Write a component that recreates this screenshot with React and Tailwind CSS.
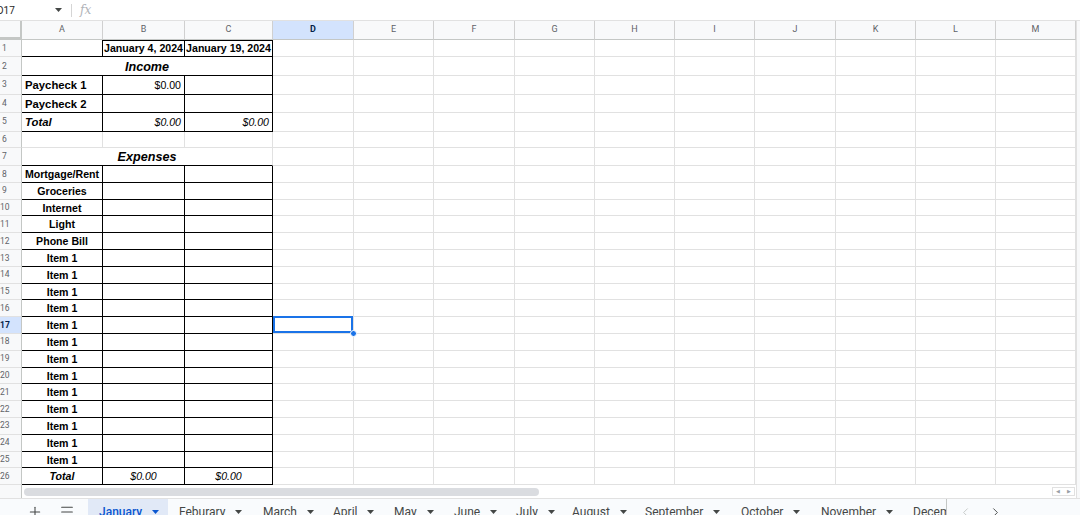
import React from "react";
import { Plus, Menu, ChevronLeft, ChevronRight } from "lucide-react";

// columns D..M (A-C are part of the budget table)
const REST = [
  { letter: "D", w: "w-[81px]" },
  { letter: "E", w: "w-[80px]" },
  { letter: "F", w: "w-[81px]" },
  { letter: "G", w: "w-[80px]" },
  { letter: "H", w: "w-[80px]" },
  { letter: "I", w: "w-[80px]" },
  { letter: "J", w: "w-[81px]" },
  { letter: "K", w: "w-[80px]" },
  { letter: "L", w: "w-[80px]" },
  { letter: "M", w: "w-[80px]" },
];

const HEAD = [
  { letter: "A", w: "w-[81px]" },
  { letter: "B", w: "w-[82px]" },
  { letter: "C", w: "w-[88px]" },
  ...REST,
];

const A = "w-[81px]";
const B = "w-[82px]";
const C = "w-[88px]";
const ABC = "w-[251px]";
const ROW_H = "h-[16.8px]";

const labels = [
  "Mortgage/Rent",
  "Groceries",
  "Internet",
  "Light",
  "Phone Bill",
  ...Array(13).fill("Item 1"),
];

const ROWS = [
  {
    n: 1,
    h: "h-[17px]",
    cells: [
      { w: A, r: 1, b: 1 },
      { w: B, r: 1, b: 1, t: 1, cls: "justify-center font-bold px-0", text: "January 4, 2024" },
      { w: C, r: 1, b: 1, t: 1, cls: "justify-center font-bold px-0", text: "January 19, 2024" },
    ],
  },
  {
    n: 2,
    h: "h-[19px]",
    cells: [{ w: ABC, r: 1, b: 1, cls: "justify-center font-bold italic text-[12.6px]", text: "Income" }],
  },
  {
    n: 3,
    h: "h-[18.5px]",
    cells: [
      { w: A, r: 1, b: 1, cls: "font-bold text-[11.3px]", text: "Paycheck 1" },
      { w: B, r: 1, b: 1, cls: "justify-end", text: "$0.00" },
      { w: C, r: 1, b: 1 },
    ],
  },
  {
    n: 4,
    h: "h-[18.5px]",
    cells: [
      { w: A, r: 1, b: 1, cls: "font-bold text-[11.3px]", text: "Paycheck 2" },
      { w: B, r: 1, b: 1 },
      { w: C, r: 1, b: 1 },
    ],
  },
  {
    n: 5,
    h: "h-[18.5px]",
    cells: [
      { w: A, r: 1, b: 1, cls: "font-bold italic text-[11.3px]", text: "Total" },
      { w: B, r: 1, b: 1, cls: "justify-end italic", text: "$0.00" },
      { w: C, r: 1, b: 1, cls: "justify-end italic", text: "$0.00" },
    ],
  },
  {
    n: 6,
    h: "h-[16.5px]",
    cells: [{ w: A }, { w: B }, { w: C }],
  },
  {
    n: 7,
    h: "h-[18px]",
    cells: [{ w: ABC, b: 1, cls: "justify-center font-bold italic text-[12.6px]", text: "Expenses" }],
  },
  ...labels.map((label, i) => ({
    n: 8 + i,
    h: ROW_H,
    cells: [
      { w: A, r: 1, b: 1, cls: "justify-center font-bold px-[1px]", text: label },
      { w: B, r: 1, b: 1 },
      { w: C, r: 1, b: 1 },
    ],
  })),
  {
    n: 26,
    h: ROW_H,
    cells: [
      { w: A, r: 1, b: 1, cls: "justify-center font-bold italic", text: "Total" },
      { w: B, r: 1, b: 1, cls: "justify-center italic", text: "$0.00" },
      { w: C, r: 1, b: 1, cls: "justify-center italic", text: "$0.00" },
    ],
  },
];

const TABS = [
  { name: "January", w: "w-[80px]", active: true },
  { name: "Feburary", w: "w-[84px]" },
  { name: "March", w: "w-[70px]" },
  { name: "April", w: "w-[61px]" },
  { name: "May", w: "w-[60px]" },
  { name: "June", w: "w-[62px]" },
  { name: "July", w: "w-[56px]" },
  { name: "August", w: "w-[73px]" },
  { name: "September", w: "w-[96px]" },
  { name: "October", w: "w-[80px]" },
  { name: "November", w: "w-[92px]" },
  { name: "December", w: "w-[92px]" },
];

function Caret({ className = "" }) {
  return (
    <svg width="7" height="4" viewBox="0 0 7 4" className={className}>
      <path d="M0 0h7L3.5 4z" fill="currentColor" />
    </svg>
  );
}

function Cell({ w, h, r, b, t, cls = "", text }) {
  return (
    <div
      className={`${w} ${h} box-border flex shrink-0 items-center overflow-hidden whitespace-nowrap border-r border-b px-[3px] pt-[2px] text-[10.6px] text-black ${
        r ? "border-r-black" : "border-r-[#e1e1e1]"
      } ${b ? "border-b-black" : "border-b-[#e1e1e1]"} ${
        t ? "shadow-[inset_0_1px_0_#000]" : ""
      } ${cls}`}
    >
      {text}
    </div>
  );
}

function Row({ row }) {
  const selected = row.n === 17;
  return (
    <div className="flex">
      <div
        className={`${row.h} box-border flex w-[22px] shrink-0 items-center border-r border-b border-r-[#c4c7c5] border-b-[#e1e1e1] font-['Roboto',sans-serif] text-[8.5px] ${
          selected ? "bg-[#d3e3fd] font-bold text-[#041e49]" : "bg-[#f8f9fa] text-[#5f6368]"
        }`}
      >
        <span className="w-[9px] text-center">{row.n}</span>
      </div>
      {row.cells.map((c, i) => (
        <Cell key={i} h={row.h} {...c} />
      ))}
      {REST.map((col, i) => (
        <div
          key={col.letter}
          className={`${col.w} ${row.h} relative box-border shrink-0 border-r border-b border-[#e1e1e1]`}
        >
          {selected && i === 0 && (
            <>
              <div className="absolute -top-px left-0 right-0 bottom-0 z-10 border-2 border-[#1a73e8]" />
              <div className="absolute -bottom-[4px] -right-[4px] z-20 h-[7px] w-[7px] rounded-full border border-white bg-[#1a73e8]" />
            </>
          )}
        </div>
      ))}
    </div>
  );
}

export default function App() {
  return (
    <div className="h-[515px] w-[1080px] overflow-hidden bg-white font-['Liberation_Sans',Arial,sans-serif]">
      {/* name box + formula bar */}
      <div className="flex h-[21px] items-center border-b border-[#e1e1e1] font-['Roboto',sans-serif]">
        <div className="-ml-[3px] w-[58px] text-[10px] text-[#1f1f1f]">D17</div>
        <Caret className="text-[#444746]" />
        <div className="ml-[9px] h-[13px] w-px bg-[#d5d5d5]" />
        <div className="ml-[8px] font-['DejaVu_Serif',serif] text-[12px] italic text-[#b0b3b8]">fx</div>
      </div>

      <div className="flex">
        <div className="flex flex-col">
          {/* column headers */}
          <div className="flex h-[19px] font-['Roboto',sans-serif] text-[9px]">
            <div className="box-border h-[19px] w-[22px] shrink-0 border-r-2 border-b-[3px] border-[#c4c7c5] bg-[#f8f9fa]" />
            {HEAD.map((col) => (
              <div
                key={col.letter}
                className={`${col.w} box-border flex h-[19px] shrink-0 items-center justify-center border-r border-b border-r-[#d0d0d0] border-b-[#c4c7c5] ${
                  col.letter === "D"
                    ? "bg-[#d3e3fd] font-bold text-[#041e49]"
                    : "bg-[#f8f9fa] text-[#5f6368]"
                }`}
              >
                {col.letter}
              </div>
            ))}
          </div>

          {ROWS.map((row) => (
            <Row key={row.n} row={row} />
          ))}

          {/* horizontal scrollbar */}
          <div className="flex h-[13px]">
            <div className="w-[22px] shrink-0 border-r border-[#c4c7c5] bg-[#f8f9fa]" />
            <div className="flex flex-1 items-center pl-[2px] pr-px">
              <div className="h-[8px] w-[515px] rounded-full bg-[#dadce0]" />
              <div className="ml-auto flex h-[9px] w-[23px] items-center justify-around border border-[#e1e1e1] text-[5px] text-[#9aa0a6]">
                <span>◀</span>
                <span>▶</span>
              </div>
            </div>
          </div>
        </div>
        <div className="w-[4px] border-l border-[#e1e1e1] bg-[#f8f9fa]" />
      </div>

      {/* sheet tabs */}
      <div className="flex h-[27px] border-t border-[#e1e1e1] bg-[#f9fbfd] font-['Roboto',sans-serif] text-[12px] text-[#444746]">
        <div className="flex w-[88px] shrink-0 items-center">
          <Plus size={16} strokeWidth={1.6} className="ml-[27px]" />
          <Menu size={16} strokeWidth={1.6} className="ml-[16px]" />
        </div>
        <div className="flex w-[859px] shrink-0 overflow-hidden border-r border-[#c4c7c5]">
          {TABS.map((tab) => (
            <div
              key={tab.name}
              className={`${tab.w} flex shrink-0 items-center gap-[10px] pl-[11px] ${
                tab.active ? "bg-[#e1e9f7] font-medium text-[#0b57d0]" : ""
              }`}
            >
              <span>{tab.name}</span>
              <Caret />
            </div>
          ))}
        </div>
        <div className="flex items-center">
          <ChevronLeft size={15} strokeWidth={1.5} className="ml-[11px] text-[#c4c7c5]" />
          <ChevronRight size={15} strokeWidth={1.5} className="ml-[15px] text-[#444746]" />
        </div>
      </div>
    </div>
  );
}
